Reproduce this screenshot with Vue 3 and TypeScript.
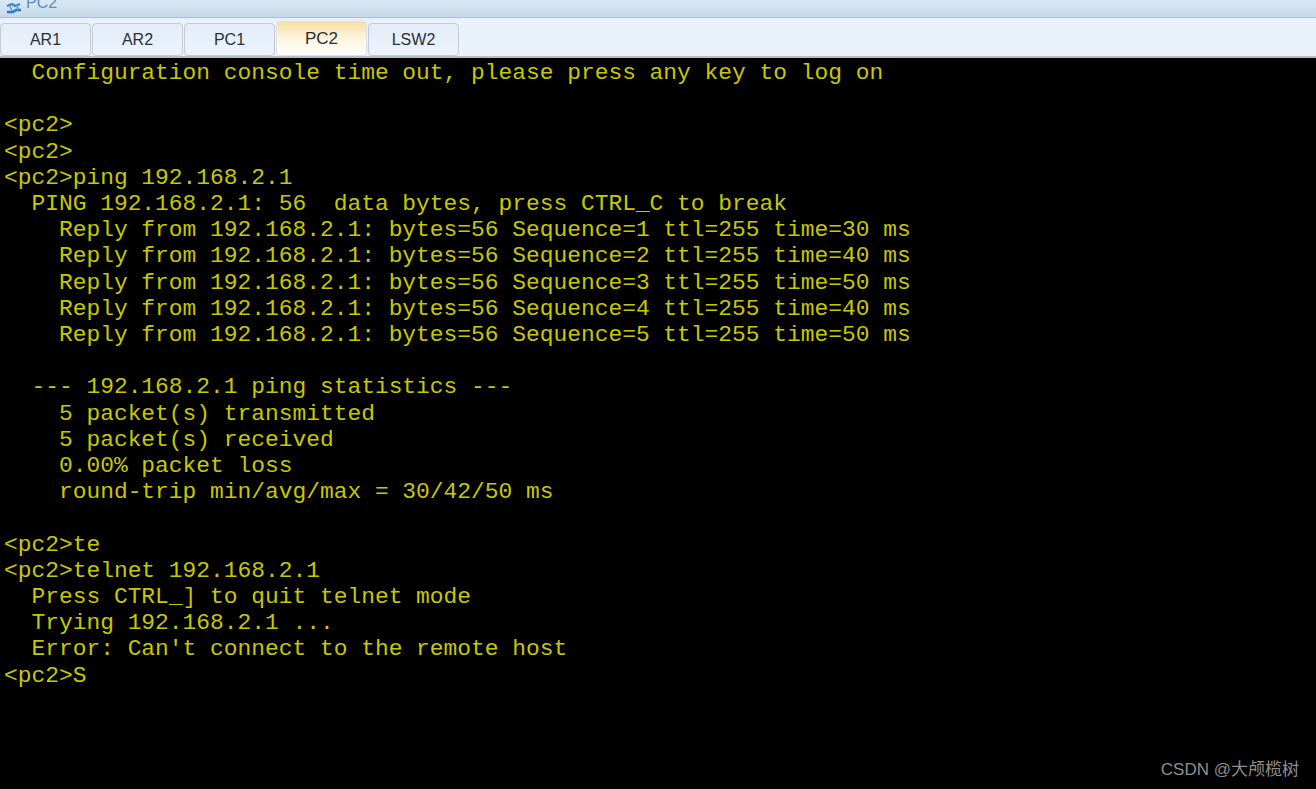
<script setup lang="ts">
const tabs = [
  { name: 'AR1', active: false },
  { name: 'AR2', active: false },
  { name: 'PC1', active: false },
  { name: 'PC2', active: true },
  { name: 'LSW2', active: false },
]
const lines = `  Configuration console time out, please press any key to log on

<pc2>
<pc2>
<pc2>ping 192.168.2.1
  PING 192.168.2.1: 56  data bytes, press CTRL_C to break
    Reply from 192.168.2.1: bytes=56 Sequence=1 ttl=255 time=30 ms
    Reply from 192.168.2.1: bytes=56 Sequence=2 ttl=255 time=40 ms
    Reply from 192.168.2.1: bytes=56 Sequence=3 ttl=255 time=50 ms
    Reply from 192.168.2.1: bytes=56 Sequence=4 ttl=255 time=40 ms
    Reply from 192.168.2.1: bytes=56 Sequence=5 ttl=255 time=50 ms

  --- 192.168.2.1 ping statistics ---
    5 packet(s) transmitted
    5 packet(s) received
    0.00% packet loss
    round-trip min/avg/max = 30/42/50 ms

<pc2>te
<pc2>telnet 192.168.2.1
  Press CTRL_] to quit telnet mode
  Trying 192.168.2.1 ...
  Error: Can't connect to the remote host
<pc2>S`
</script>

<template>
  <div class="window">
    <div class="titlebar">
      <svg class="logo" width="18" height="14" viewBox="0 0 18 14">
        <path d="M2 5 L7 3 L10 5 L15 3" fill="none" stroke="#3f86c8" stroke-width="2.4" />
        <path d="M2 11 H8 L11 9 H16" fill="none" stroke="#2f78c0" stroke-width="2.6" />
        <path d="M5 5 L7 10 M12 4 L13 9" fill="none" stroke="#5a9fd8" stroke-width="1.6" />
      </svg>
      <span class="title">PC2</span>
    </div>
    <div class="tabbar">
      <div v-for="t in tabs" :key="t.name" class="tab" :class="{ active: t.active }">{{ t.name }}</div>
    </div>
    <div class="console">
      <pre class="text">{{ lines }}</pre>
      <div class="mark">CSDN @大颅榄树</div>
    </div>
  </div>
</template>

<style scoped>
.window {
  width: 1316px;
  height: 789px;
  display: flex;
  flex-direction: column;
  overflow: hidden;
  font-family: "Liberation Sans", Arial, sans-serif;
}
.titlebar {
  height: 18px;
  flex: none;
  display: flex;
  align-items: flex-end;
  gap: 3px;
  padding-left: 5px;
  box-sizing: border-box;
  overflow: hidden;
  background: linear-gradient(#d9e8f4, #c5d9ea);
  border-bottom: 1px solid #a9c0d4;
}
.logo {
  flex: none;
  margin-bottom: 2px;
}
.title {
  font-size: 16px;
  line-height: 16px;
  margin-bottom: 6px;
  color: #5f8fb8;
}
.tabbar {
  height: 40px;
  flex: none;
  box-sizing: border-box;
  padding: 4px 0 0 0;
  display: flex;
  align-items: flex-start;
  gap: 1px;
  background: #e9f1fa;
  border-bottom: 2px solid #b4bcc4;
}
.tab {
  width: 91px;
  height: 33px;
  box-sizing: border-box;
  margin-top: 1px;
  display: flex;
  align-items: center;
  justify-content: center;
  border: 1px solid #c4cbd3;
  border-radius: 4px;
  background: linear-gradient(#e2edf9, #edf3fb);
  font-size: 16px;
  color: #2a2f36;
}
.tab.active {
  height: 35px;
  margin-top: -1px;
  background: linear-gradient(#f7e0a6, #fdf6e2 55%, #ffffff);
  border-color: #dfe3e8;
  font-size: 17px;
}
.console {
  flex: 1;
  position: relative;
  background: #000;
  overflow: hidden;
}
.text {
  margin: 0;
  padding: 2px 0 0 4px;
  font-family: "Liberation Mono", "Courier New", monospace;
  font-size: 22.9px;
  line-height: 26.2px;
  color: #c8c800;
  white-space: pre;
}
.mark {
  position: absolute;
  right: 17px;
  bottom: 8px;
  font-family: "Liberation Sans", "Noto Sans CJK SC", sans-serif;
  font-size: 17px;
  line-height: 22px;
  color: #8f8f8f;
}
</style>
